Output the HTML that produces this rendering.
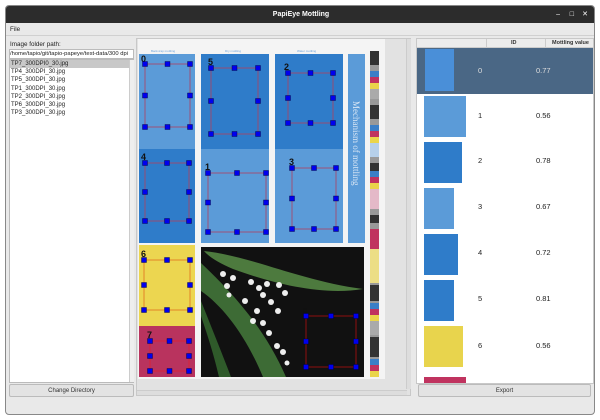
<!DOCTYPE html>
<html><head><meta charset="utf-8"><style>
*{margin:0;padding:0;box-sizing:border-box}
body{width:600px;height:420px;background:#fff;font-family:"Liberation Sans",sans-serif;position:relative;overflow:hidden}
.a{position:absolute}
.win{left:5px;top:5px;width:590px;height:410px;background:#e9e9e9;border:1px solid #888;border-radius:4px;overflow:hidden}
.title{left:0;top:0;width:590px;height:17px;background:#2c2c2c;color:#fff;font-size:7px;font-weight:bold;text-align:center;line-height:17px}
.t{font-size:6.3px;color:#222}
.btn{background:#e3e3e3;border:1px solid #bbb;border-radius:2px;font-size:6px;text-align:center;line-height:12px;color:#333}
.row{font-size:7.5px;color:#222}
</style></head><body>
<div class="a win">
 <div class="a title">PapiEye Mottling
  <span class="a" style="right:36px;top:0;font-weight:normal">–</span>
  <span class="a" style="right:22px;top:0;font-weight:normal">□</span>
  <span class="a" style="right:8px;top:0;font-weight:normal">✕</span>
 </div>
 <div class="a t" style="left:4px;top:20px">File</div>
 <div class="a" style="left:0;top:29px;width:590px;height:1px;background:#d0d0d0"></div>
 <div class="a t" style="left:4px;top:35px">Image folder path:</div>
 <div class="a t" style="left:3px;top:43px;width:125px;height:10px;background:#fff;border:1px solid #bbb;overflow:hidden;white-space:nowrap;line-height:9px;font-size:5.8px">/home/tapio/git/tapio-papeye/test-data/300 dpi</div>
 <div class="a" style="left:3px;top:53px;width:125px;height:324px;background:#fff;border:1px solid #bbb"></div>
 <div class="a" style="left:123px;top:54px;width:5px;height:322px;background:#eee;border-left:1px solid #ccc"></div>
 <div class="a" style="left:4px;top:54px;width:119px;height:8px;background:#c8c8c8"></div>
 <div class="a t" style="left:5px;top:54px;line-height:8.2px;font-size:6px">TP7_300DPI0_30.jpg<br>TP4_300DPI_30.jpg<br>TP5_300DPI_30.jpg<br>TP1_300DPI_30.jpg<br>TP2_300DPI_30.jpg<br>TP6_300DPI_30.jpg<br>TP3_300DPI_30.jpg</div>
 <div class="a btn" style="left:3px;top:378px;width:125px;height:13px">Change Directory</div>
 <div class="a" style="left:130px;top:32px;width:275px;height:358px;background:#e2e2e2;border:1px solid #c8c8c8"></div>
 <div class="a" style="left:400px;top:33px;width:5px;height:350px;background:#ddd;border-left:1px solid #ccc"></div>
 <div class="a" style="left:131px;top:384px;width:270px;height:5px;background:#ddd;border-top:1px solid #ccc"></div>
 <svg class="a" style="left:132px;top:33px" width="247" height="340" viewBox="137 38 247 340">
  <rect x="137" y="38" width="247" height="340" fill="#f4f4f4"/>
  <rect x="138" y="53" width="56" height="95" fill="#5b9bd8"/>
  <rect x="138" y="148" width="56" height="94" fill="#2f7cc9"/>
  <rect x="200" y="53" width="68" height="95" fill="#2f7cc9"/>
  <rect x="200" y="148" width="68" height="94" fill="#5b9bd8"/>
  <rect x="274" y="53" width="68" height="95" fill="#2f7cc9"/>
  <rect x="274" y="148" width="68" height="94" fill="#5b9bd8"/>
  <rect x="347" y="53" width="17" height="189" fill="#5b9bd8"/>
  <text x="0" y="0" transform="translate(352,100) rotate(90)" fill="#d8e6f5" font-size="9" font-family="Liberation Serif">Mechanism of mottling</text>
  <text x="150" y="51" fill="#6fa3da" font-size="3">Back-trap mottling</text>
  <text x="224" y="51" fill="#6fa3da" font-size="3">Dry mottling</text>
  <text x="296" y="51" fill="#6fa3da" font-size="3">Water mottling</text>
  <g>
   <rect x="369" y="50" width="9" height="326" fill="#999"/>
   <rect x="369" y="50" width="9" height="14" fill="#333"/><rect x="369" y="70" width="9" height="6" fill="#3b7fc7"/><rect x="369" y="76" width="9" height="6" fill="#c0335f"/><rect x="369" y="82" width="9" height="6" fill="#ead54a"/><rect x="369" y="88" width="9" height="10" fill="#aaa"/><rect x="369" y="104" width="9" height="14" fill="#333"/><rect x="369" y="124" width="9" height="6" fill="#3b7fc7"/><rect x="369" y="130" width="9" height="6" fill="#c0335f"/><rect x="369" y="136" width="9" height="6" fill="#ead54a"/><rect x="369" y="142" width="9" height="14" fill="#b6d0ea"/><rect x="369" y="162" width="9" height="8" fill="#333"/><rect x="369" y="170" width="9" height="6" fill="#3b7fc7"/><rect x="369" y="176" width="9" height="6" fill="#c0335f"/><rect x="369" y="182" width="9" height="6" fill="#ead54a"/><rect x="369" y="188" width="9" height="20" fill="#e4b9c8"/><rect x="369" y="214" width="9" height="8" fill="#333"/><rect x="369" y="228" width="9" height="20" fill="#c0335f"/><rect x="369" y="248" width="9" height="34" fill="#ecde85"/><rect x="369" y="284" width="9" height="16" fill="#333"/><rect x="369" y="302" width="9" height="6" fill="#3b7fc7"/><rect x="369" y="308" width="9" height="6" fill="#c0335f"/><rect x="369" y="314" width="9" height="6" fill="#ead54a"/><rect x="369" y="320" width="9" height="14" fill="#aaa"/><rect x="369" y="336" width="9" height="20" fill="#333"/><rect x="369" y="358" width="9" height="6" fill="#3b7fc7"/><rect x="369" y="364" width="9" height="6" fill="#c0335f"/><rect x="369" y="370" width="9" height="6" fill="#ead54a"/>
  </g>
  <rect x="138" y="244" width="56" height="81" fill="#ecd650"/>
  <rect x="138" y="325" width="56" height="51" fill="#b9335e"/>
  <rect x="200" y="246" width="163" height="130" fill="#111"/>
  <path d="M200 262 C235 295 265 330 285 376 L262 376 C245 335 222 305 200 290Z" fill="#3d6b35"/>
  <path d="M203 250 C250 255 300 280 362 288 C320 295 270 282 232 268 C218 262 208 256 203 250Z" fill="#4d7a3e"/>
  <path d="M200 300 C212 330 222 355 230 376 L218 376 C212 350 205 330 200 315Z" fill="#2f5a2a"/>
  <g fill="#eee">
   <circle cx="222" cy="273" r="3"/><circle cx="232" cy="277" r="3"/><circle cx="226" cy="285" r="3"/><circle cx="250" cy="281" r="3"/><circle cx="258" cy="287" r="3"/><circle cx="266" cy="283" r="3"/><circle cx="262" cy="294" r="3"/><circle cx="278" cy="284" r="3"/><circle cx="284" cy="292" r="3"/><circle cx="270" cy="301" r="3"/><circle cx="277" cy="310" r="3"/><circle cx="244" cy="300" r="3"/><circle cx="256" cy="310" r="3"/><circle cx="252" cy="320" r="3"/><circle cx="262" cy="322" r="3"/><circle cx="268" cy="332" r="3"/><circle cx="276" cy="345" r="3"/><circle cx="282" cy="351" r="3"/><circle cx="286" cy="362" r="2.5"/><circle cx="228" cy="294" r="2.5"/>
  </g>
  <g font-family="Liberation Sans" font-weight="bold" font-size="9" fill="#111">
   <text x="140" y="61">0</text><text x="207" y="64">5</text><text x="283" y="69">2</text><text x="140" y="159">4</text><text x="204" y="169">1</text><text x="288" y="164">3</text><text x="140" y="256">6</text><text x="146" y="337">7</text><text x="302" y="312" font-size="7">8</text>
  </g>
  <g fill="none" stroke-width="0.8">
   <rect x="144" y="63" width="45" height="63" stroke="#b04060"/>
   <rect x="210" y="67" width="47" height="66" stroke="#b04060"/>
   <rect x="287" y="72" width="45" height="50" stroke="#b04060"/>
   <rect x="144" y="162" width="44" height="58" stroke="#b04060"/>
   <rect x="207" y="172" width="58" height="59" stroke="#b04060"/>
   <rect x="291" y="167" width="44" height="61" stroke="#b04060"/>
   <rect x="143" y="259" width="46" height="50" stroke="#e07020"/>
   <rect x="149" y="340" width="39" height="30" stroke="#e02030"/>
   <rect x="305" y="315" width="50" height="51" stroke="#b01010"/>
  </g>
  <g fill="#0000ee" stroke="#003" stroke-width="0.4" id="m">
  </g>
 </svg>
 <div class="a" style="left:410px;top:32px;width:178px;height:346px;background:#fff;border:1px solid #c8c8c8"></div>
 <div class="a" style="left:411px;top:33px;width:176px;height:9px;background:#ececec;border-bottom:1px solid #ccc;font-size:5.5px;font-weight:bold;color:#333">
  <span class="a" style="left:69px;top:0;height:9px;border-left:1px solid #ccc"></span>
  <span class="a" style="left:128px;top:0;height:9px;border-left:1px solid #ccc"></span>
  <span class="a" style="left:94px;top:1px">ID</span>
  <span class="a" style="left:135px;top:1px">Mottling value</span>
 </div>
 <div class="a" style="left:411px;top:42px;width:176px;height:46px;background:#4a6785"></div>
 <div class="a" style="left:419px;top:43px;width:29px;height:42px;background:#4a8fd8"></div>
 <div class="a row" style="left:472px;top:60px;color:#ddd">0</div><div class="a row" style="left:530px;top:60px;color:#ddd">0.77</div>
 <div class="a" style="left:418px;top:90px;width:42px;height:41px;background:#5b9bd8"></div>
 <div class="a row" style="left:472px;top:105px">1</div><div class="a row" style="left:530px;top:105px">0.56</div>
 <div class="a" style="left:418px;top:136px;width:38px;height:41px;background:#2f7cc9"></div>
 <div class="a row" style="left:472px;top:150px">2</div><div class="a row" style="left:530px;top:150px">0.78</div>
 <div class="a" style="left:418px;top:182px;width:30px;height:41px;background:#5b9bd8"></div>
 <div class="a row" style="left:472px;top:196px">3</div><div class="a row" style="left:530px;top:196px">0.67</div>
 <div class="a" style="left:418px;top:228px;width:34px;height:41px;background:#2f7cc9"></div>
 <div class="a row" style="left:472px;top:242px">4</div><div class="a row" style="left:530px;top:242px">0.72</div>
 <div class="a" style="left:418px;top:274px;width:30px;height:41px;background:#2f7cc9"></div>
 <div class="a row" style="left:472px;top:288px">5</div><div class="a row" style="left:530px;top:288px">0.81</div>
 <div class="a" style="left:418px;top:320px;width:39px;height:41px;background:#e8d44d"></div>
 <div class="a row" style="left:472px;top:335px">6</div><div class="a row" style="left:530px;top:335px">0.56</div>
 <div class="a" style="left:418px;top:371px;width:42px;height:6px;background:#c0335f"></div>
 <div class="a btn" style="left:412px;top:378px;width:173px;height:13px">Export</div>
</div>
<script>
var g=document.getElementById('m'),B=[[144,63,189,126],[210,67,257,133],[287,72,332,122],[144,162,188,220],[207,172,265,231],[291,167,335,228],[143,259,189,309],[149,340,188,370],[305,315,355,366]];
B.forEach(function(b){var xs=[b[0],(b[0]+b[2])/2,b[2]],ys=[b[1],(b[1]+b[3])/2,b[3]];xs.forEach(function(x,i){ys.forEach(function(y,j){if(i==1&&j==1)return;var r=document.createElementNS('http://www.w3.org/2000/svg','rect');r.setAttribute('x',x-2.5);r.setAttribute('y',y-2.5);r.setAttribute('width',5);r.setAttribute('height',5);g.appendChild(r);});});});
</script>
</body></html>
